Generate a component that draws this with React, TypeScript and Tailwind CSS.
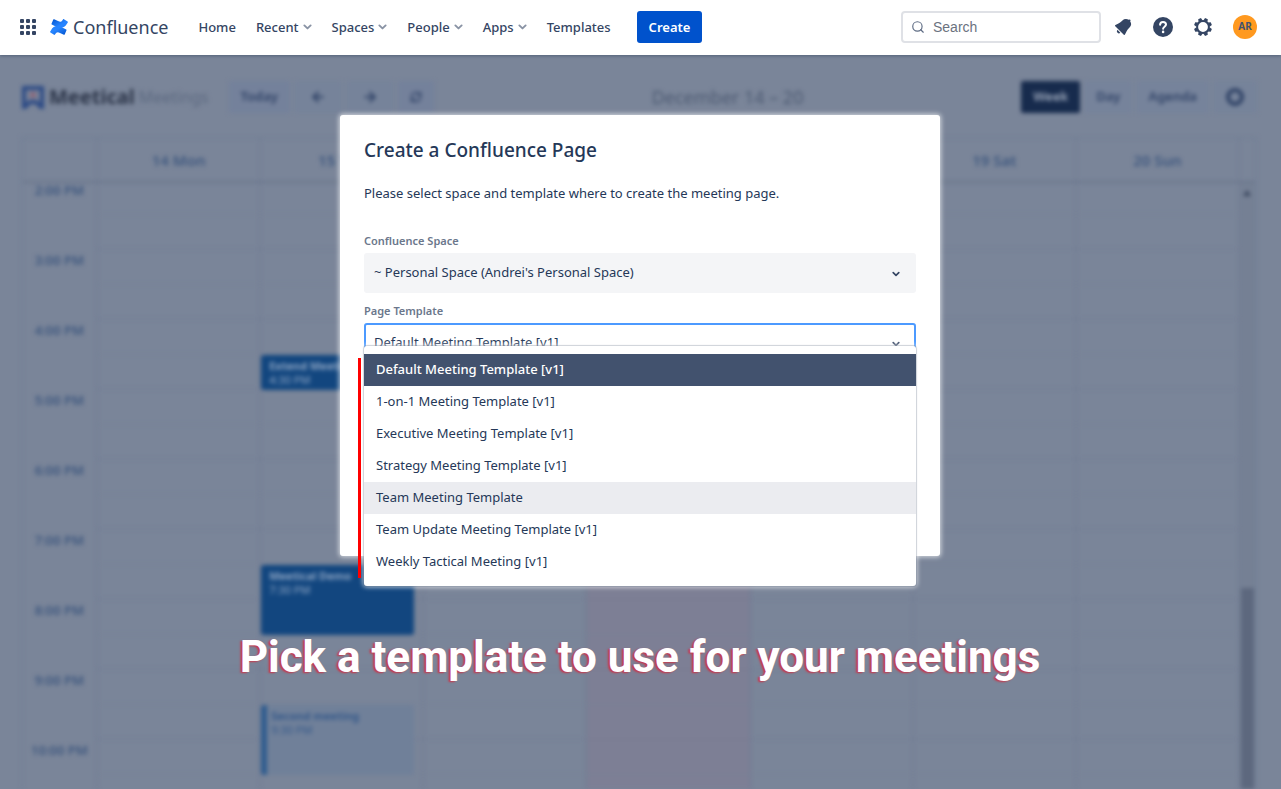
import { ArrowLeft, ArrowRight, RefreshCw, Search } from "lucide-react";

const NAV = [
  { label: "Home", menu: false },
  { label: "Recent", menu: true },
  { label: "Spaces", menu: true },
  { label: "People", menu: true },
  { label: "Apps", menu: true },
  { label: "Templates", menu: false },
];

const TEMPLATES = [
  "Default Meeting Template [v1]",
  "1-on-1 Meeting Template [v1]",
  "Executive Meeting Template [v1]",
  "Strategy Meeting Template [v1]",
  "Team Meeting Template",
  "Team Update Meeting Template [v1]",
  "Weekly Tactical Meeting [v1]",
];

// Days fully covered by the dialog carry no heading.
const DAYS = [
  { id: "mon", label: "14 Mon" },
  { id: "tue", label: "15 Tue" },
  { id: "wed", label: "" },
  { id: "thu", label: "" },
  { id: "fri", label: "" },
  { id: "sat", label: "19 Sat" },
  { id: "sun", label: "20 Sun" },
];
const HOURS = ["2:00 PM", "3:00 PM", "4:00 PM", "5:00 PM", "6:00 PM", "7:00 PM", "8:00 PM", "9:00 PM", "10:00 PM"];

const EVENTS = [
  { title: "Extend Meeting", time: "4:30 PM", place: "row-start-6 row-span-1 bg-[#12467f] text-[#8fa6c4] pl-2" },
  { title: "Meetical Demo", time: "7:30 PM", place: "row-start-12 row-span-2 bg-[#12467f] text-[#8fa6c4] pl-2" },
  { title: "Second meeting", time: "9:30 PM", place: "row-start-16 row-span-2 bg-[#708099] text-[#34588a] border-l-6 border-[#2f5c8f] pl-1" },
];

function Chevron({ className }: { className: string }) {
  return (
    <svg viewBox="0 0 10 6" className={className} fill="none" stroke="currentColor" strokeWidth="2.1" strokeLinecap="round" strokeLinejoin="round" aria-hidden="true">
      <path d="M1.500 1.200 5 4.600 8.500 1.200" />
    </svg>
  );
}

function AppSwitcherIcon() {
  return (
    <svg viewBox="0 0 16 16" className="size-4" fill="#344563" aria-hidden="true">
      {[0, 6, 12].map((y) => [0, 6, 12].map((x) => <rect key={`${x}-${y}`} x={x} y={y} width="4" height="4" rx="1" />))}
    </svg>
  );
}

function ConfluenceMark() {
  return (
    <svg viewBox="0 0 18 16" className="h-4 w-[18px]" aria-hidden="true">
      <defs>
        <linearGradient id="markLow" x1="1" y1="1" x2="0.2" y2="0.3">
          <stop offset="0" stopColor="#0052cc" />
          <stop offset="0.8" stopColor="#2684ff" />
        </linearGradient>
        <linearGradient id="markHigh" x1="0" y1="0" x2="0.8" y2="0.7">
          <stop offset="0" stopColor="#0052cc" />
          <stop offset="0.8" stopColor="#2684ff" />
        </linearGradient>
      </defs>
      <path fill="url(#markLow)" d="M.9 11.400.2 12.600c-.2.300-.1.700.2.900l3.700 2.300c.3.200.7.100.9-.2 1.600-2.600 2.400-2.900 5-1.700l3.800 1.800c.3.100.7 0 .9-.3l1.800-4.100c.1-.3 0-.7-.3-.8l-3.900-1.900C7.300 6.100 3.700 6.500.9 11.400Z" />
      <path fill="url(#markHigh)" d="M17.100 4.600 17.800 3.400c.2-.3.1-.7-.2-.9L13.900.2c-.3-.2-.7-.1-.9.200-1.600 2.600-2.400 2.900-5 1.700L4.200.3c-.3-.1-.7 0-.9.300L1.500 4.700c-.1.300 0 .7.300.8l3.900 1.900c5 2.500 8.600 2.100 11.400-2.800Z" />
    </svg>
  );
}

function BellIcon() {
  return (
    <svg viewBox="0 0 24 24" className="size-6" fill="#344563" aria-hidden="true">
      <path d="M6.485 17.669a2 2 0 0 0 2.829 0l-2.829-2.83a2 2 0 0 0 0 2.830zm4.897-12.191-.725.725c-.782.782-2.210 1.813-3.206 2.311l-3.017 1.509c-.495.248-.584.774-.187 1.171l8.556 8.556c.398.396.922.313 1.171-.188l1.510-3.016c.494-.988 1.526-2.420 2.311-3.206l.725-.726a5.048 5.048 0 0 0 .640-6.356 1.010 1.010 0 1 0-1.354-1.494c-.023.025-.046.049-.066.075a5.043 5.043 0 0 0-2.788-.840 5.036 5.036 0 0 0-3.570 1.478z" />
    </svg>
  );
}

function HelpIcon() {
  return (
    <svg viewBox="0 0 20 20" className="size-5" aria-hidden="true">
      <circle cx="10" cy="10" r="10" fill="#344563" />
      <path d="M7.100 7.800C7.100 6.100 8.300 5 10 5s3 1.100 3 2.600c0 2.100-2.900 2.200-2.900 4.200" fill="none" stroke="#fff" strokeWidth="2" strokeLinecap="round" />
      <circle cx="10.100" cy="14.900" r="1.300" fill="#fff" />
    </svg>
  );
}

function GearIcon() {
  return (
    <svg viewBox="-10 -10 20 20" className="size-5" aria-hidden="true">
      <circle r="5.900" fill="none" stroke="#344563" strokeWidth="2" />
      {[0, 45, 90, 135, 180, 225, 270, 315].map((a) => (
        <path key={a} d="M-2.200-6.200-1.500-9h3l.7 2.800Z" fill="#344563" transform={`rotate(${a + 22.5})`} />
      ))}
    </svg>
  );
}

function Header() {
  return (
    <header className="z-10 flex h-[55px] shrink-0 items-center bg-white pr-6 pb-[2px] pl-5 text-[#344563] shadow-[0_1px_3px_rgba(60,75,100,0.6)]">
      <button aria-label="Switch apps"><AppSwitcherIcon /></button>
      <a href="#" className="ml-[14px] flex items-center gap-[5px] text-[18px] leading-6">
        <ConfluenceMark />
        <span>Confluence</span>
      </a>
      <nav className="ml-[30px] flex items-center gap-5 text-[13px] leading-5 font-medium">
        {NAV.map((n) =>
          n.menu ? (
            <button key={n.label} className="flex items-center gap-1">
              {n.label}
              <Chevron className="h-[6px] w-[9px] text-[#8993a4]" />
            </button>
          ) : (
            <a key={n.label} href="#">{n.label}</a>
          ),
        )}
        <button className="ml-[6px] h-8 rounded-[3px] bg-[#0052cc] px-3 font-semibold text-white">Create</button>
      </nav>
      <div className="ml-auto flex items-center">
        <label className="flex h-8 w-[200px] items-center gap-2 rounded-[4px] border-2 border-[#dfe1e6] px-2">
          <Search className="size-[14px] shrink-0 text-[#5e6c84]" aria-hidden="true" />
          <input aria-label="Search" placeholder="Search" className="w-full min-w-0 font-['Liberation_Sans'] text-[14px] leading-5 outline-none placeholder:text-[#6b7280]" />
        </label>
        <button aria-label="Notifications" className="ml-[10px]"><BellIcon /></button>
        <button aria-label="Help" className="ml-[18px]"><HelpIcon /></button>
        <button aria-label="Settings" className="ml-5"><GearIcon /></button>
        <button className="ml-5 size-6 rounded-full bg-[#ff991f] text-[10px] font-bold text-[#42526e]">AR</button>
      </div>
    </header>
  );
}

function Toolbar() {
  return (
    <div className="flex h-8 items-center justify-between text-[13px] font-semibold text-[#2f4266]">
      <div className="flex items-center">
        <svg viewBox="0 0 24 24" className="size-6" fill="none" aria-hidden="true">
          <path d="M3 23V3h18v20l-6-6H9Z" stroke="#2c4a85" strokeWidth="4" />
          <circle cx="12" cy="10" r="3" fill="#8b6478" />
        </svg>
        <span className="ml-1 text-[20px] font-bold text-[#2b3448]">Meetical</span>
        <span className="ml-1 text-[16px] font-normal text-[#5c6980]">Meetings</span>
        <div className="ml-5 flex items-center gap-1">
          <button className="h-8 bg-[#74819b] px-3">Today</button>
          <button aria-label="Previous week" className="flex h-8 w-12 items-center justify-center bg-[#76839a]"><ArrowLeft className="size-4" strokeWidth={3} /></button>
          <button aria-label="Next week" className="flex h-8 w-12 items-center justify-center bg-[#76839a]"><ArrowRight className="size-4" strokeWidth={3} /></button>
          <button aria-label="Refresh" className="flex h-8 w-9 items-center justify-center bg-[#74819b]"><RefreshCw className="size-3" strokeWidth={3} /></button>
        </div>
      </div>
      <h2 className="text-[18px] font-normal text-[#4d5a72]">December 14 – 20</h2>
      <div className="flex items-center gap-1">
        <button className="h-8 rounded-[2px] bg-[#172b4d] px-3 text-[#a3aec0]">Week</button>
        <button className="h-8 bg-[#76839b] px-3">Day</button>
        <button className="h-8 bg-[#76839b] px-3">Agenda</button>
        <button aria-label="Calendar settings" className="flex h-8 w-11 items-center justify-center bg-[#76839a]">
          <svg viewBox="0 0 20 20" className="size-5" fill="none" stroke="#2f4266" strokeWidth="4" aria-hidden="true"><circle cx="10" cy="10" r="7" /></svg>
        </button>
      </div>
    </div>
  );
}

function DayColumn({ index }: { index: number }) {
  return (
    <div className={index === 3 ? "-mt-[3px] grid auto-rows-[35px] grid-cols-1 border-r-2 border-[#757b92] bg-[#7d7f95]" : "-mt-[3px] grid auto-rows-[35px] grid-cols-1 border-r-2 border-[#737e94]"}>
      {HOURS.flatMap((h, i) => [
        <div key={h} className="col-start-1 border-b border-[#778297]" style={{ gridRowStart: i * 2 + 1 }} />,
        <div key={`${h}-half`} className={index === 3 ? "col-start-1 border-b border-[#777b91]" : "col-start-1 border-b-2 border-[#758096]"} style={{ gridRowStart: i * 2 + 2 }} />,
      ])}
      {index === 1 &&
        EVENTS.map((e) => (
          <div key={e.title} className={`${e.place} col-start-1 mr-2 overflow-hidden rounded-[3px] text-[11px] leading-[14px]`}>
            <div className="pt-1 font-bold">{e.title}</div>
            <div>{e.time}</div>
          </div>
        ))}
    </div>
  );
}

function Calendar() {
  return (
    <div className="flex min-h-0 flex-1 flex-col border-x-2 border-t-2 border-[#738096] text-[#3f587f]">
      <div className="grid h-[44px] shrink-0 grid-cols-[75px_repeat(7,minmax(0,1fr))_15px] border-b-2 border-[#6a768c] text-[15px] font-semibold">
        <div className="border-r-2 border-[#737e94]" />
        {DAYS.map((d) => (
          <div key={d.id} className="flex items-center justify-center border-r-2 border-[#737e94]">{d.label}</div>
        ))}
      </div>
      <div className="grid min-h-0 flex-1 grid-cols-[75px_repeat(7,minmax(0,1fr))_15px] overflow-hidden">
        <div className="-mt-[3px] border-r-2 border-[#737e94] text-center text-[13px] font-semibold">
          {HOURS.map((h) => (
            <div key={h} className="h-[70px] leading-5">{h}</div>
          ))}
        </div>
        {DAYS.map((d, i) => <DayColumn key={d.id} index={i} />)}
        <div className="flex flex-col items-center bg-[#758094] pt-[7px]">
          <svg viewBox="0 0 8 6" className="h-[6px] w-2" fill="#39465e" aria-hidden="true"><path d="m0 6 4-6 4 6Z" /></svg>
          <div className="mt-auto h-[222px] w-[13px] bg-[#5d687e]" />
        </div>
      </div>
    </div>
  );
}

function PageDialog() {
  return (
    <div role="dialog" aria-labelledby="dialog-title" className="min-h-[441px] w-full max-w-[600px] rounded-[3px] bg-white px-6 pt-[21px] text-[#253858] shadow-[0_0_5px_1px_rgba(255,255,255,0.7)]">
      <h1 id="dialog-title" className="text-[19px] leading-7 font-medium">Create a Confluence Page</h1>
      <p className="mt-[19px] text-[13px] leading-5">Please select space and template where to create the meeting page.</p>
      <div className="mt-[30px] text-[11px] leading-4 font-semibold text-[#6b778c]">
        <label htmlFor="space" className="block">Confluence Space</label>
      </div>
      <div className="relative mt-1">
        <select id="space" className="h-10 w-full appearance-none rounded-[3px] border-2 border-[#f4f5f7] bg-[#f4f5f7] px-2 text-[13px] text-[#253858] outline-none">
          <option>~ Personal Space (Andrei's Personal Space)</option>
        </select>
        <Chevron className="pointer-events-none absolute top-[18px] right-4 h-[6px] w-2 text-[#344563]" />
      </div>
      <div className="mt-[10px] text-[11px] leading-4 font-semibold text-[#6b778c]">
        <label htmlFor="template" className="block">Page Template</label>
      </div>
      <div className="relative mt-1">
        <select id="template" className="h-10 w-full appearance-none rounded-[3px] border-2 border-[#4c9aff] bg-white px-2 text-[13px] text-[#253858] outline-none">
          <option>{TEMPLATES[0]}</option>
        </select>
        <Chevron className="pointer-events-none absolute top-[18px] right-4 h-[6px] w-2 text-[#344563]" />
        <div className="absolute inset-x-0 top-[23px]">
          <div role="listbox" aria-label="Page Template" className="rounded-[3px] bg-white py-2 shadow-[0_0_1px_1px_rgba(9,30,66,0.2),0_0_5px_1px_rgba(255,255,255,0.8)]">
            {TEMPLATES.map((t, i) => (
              <button
                key={t}
                role="option"
                aria-selected={i === 0}
                className={
                  i === 0
                    ? "block h-8 w-full bg-[#42526e] px-3 text-left text-[13px] font-medium text-white"
                    : i === 4
                      ? "block h-8 w-full bg-[#ebecf0] px-3 text-left text-[13px]"
                      : "block h-8 w-full px-3 text-left text-[13px]"
                }
              >
                {t}
              </button>
            ))}
          </div>
          <div className="absolute top-3 bottom-2 -left-[6px] w-[3px] bg-[#ff0000]" />
        </div>
      </div>
    </div>
  );
}

export default function App() {
  return (
    <div className="flex h-screen flex-col overflow-hidden bg-[#7a8599] font-['Noto_Sans','Open_Sans',sans-serif]">
      <Header />
      <main className="relative flex min-h-0 flex-1 flex-col">
        <div className="flex min-h-0 flex-1 flex-col gap-6 pt-[26px] pr-6 pl-[21px] blur-[2px]">
          <Toolbar />
          <Calendar />
        </div>
        <div className="absolute inset-0 flex flex-col items-center pt-[60px] pr-px">
          <PageDialog />
          <p className="mt-[72px] font-[Roboto] text-[44px] leading-[58px] font-bold text-white [text-shadow:-2px_1px_2px_#c8394b]">
            Pick a template to use for your meetings
          </p>
        </div>
      </main>
    </div>
  );
}
